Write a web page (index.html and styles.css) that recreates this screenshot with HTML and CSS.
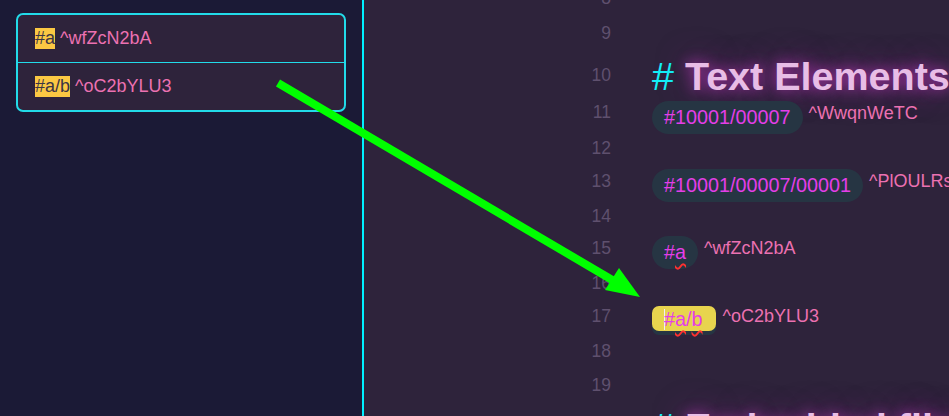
FILE: index.html
```html
<!DOCTYPE html>
<html>
<head>
<meta charset="utf-8">
<link rel="stylesheet" href="styles.css">
</head>
<body>
<div class="app">
  <aside class="sidebar">
    <div class="suggest">
      <div class="item"><span class="hl">#a</span><span class="ref">^wfZcN2bA</span></div>
      <div class="item"><span class="hl">#a/b</span><span class="ref">^oC2bYLU3</span></div>
    </div>
  </aside>
  <main class="editor">
    <div class="lines">
      <div class="line"><span class="ln">8</span><div class="lc"></div></div>
      <div class="line l9"><span class="ln">9</span><div class="lc"></div></div>
      <div class="line l10"><span class="ln">10</span><div class="lc"><h1 class="heading"><span class="hm">#</span> <span class="ht">Text Elements</span></h1></div></div>
      <div class="line l11"><span class="ln">11</span><div class="lc"><span class="tag">#10001/00007</span><span class="ref">^WwqnWeTC</span></div></div>
      <div class="line l12"><span class="ln">12</span><div class="lc"></div></div>
      <div class="line l13"><span class="ln">13</span><div class="lc"><span class="tag">#10001/00007/00001</span><span class="ref">^PlOULRs</span></div></div>
      <div class="line l14"><span class="ln">14</span><div class="lc"></div></div>
      <div class="line l15"><span class="ln">15</span><div class="lc"><span class="tag">#<span class="sq">a</span></span><span class="ref">^wfZcN2bA</span></div></div>
      <div class="line"><span class="ln">16</span><div class="lc"></div></div>
      <div class="line l17"><span class="ln">17</span><div class="lc"><span class="tag sel"><span class="cursor"></span>#<span class="sq">a</span>/<span class="sq">b</span></span><span class="ref">^oC2bYLU3</span></div></div>
      <div class="line"><span class="ln">18</span><div class="lc"></div></div>
      <div class="line"><span class="ln">19</span><div class="lc"></div></div>
      <div class="line l20"><span class="ln">20</span><div class="lc"><h1 class="heading"><span class="hm">#</span> <span class="ht">Embedded files</span></h1></div></div>
    </div>
  </main>
  <svg class="arrow" width="949" height="416" viewBox="0 0 949 416">
    <line x1="278" y1="83" x2="614" y2="281" stroke="#00ff00" stroke-width="8"/>
    <polygon points="640,297 605,290 619,268" fill="#00ff00"/>
  </svg>
</div>
</body>
</html>
```
FILE: styles.css
```css
html, body {
  margin: 0;
  padding: 0;
}
body {
  width: 949px;
  height: 416px;
  overflow: hidden;
  font-family: "Liberation Sans", Arial, sans-serif;
  background: #2e233b;
}
.app {
  position: relative;
  display: flex;
  width: 949px;
  height: 416px;
}
.sidebar {
  flex: none;
  width: 364px;
  box-sizing: border-box;
  background: #1b1a36;
  border-right: 2px solid #00f0ff;
  padding: 13px 0 0 16px;
}
.suggest {
  width: 330px;
  box-sizing: border-box;
  border: 2px solid #22dbe9;
  border-radius: 7px;
  background: #2e233b;
}
.item {
  height: 47px;
  display: flex;
  align-items: center;
  padding-left: 17px;
  font-size: 18px;
  white-space: nowrap;
}
.item + .item {
  border-top: 1px solid #22dbe9;
}
.item .ref {
  margin-left: 5px;
}
.hl {
  background: #fbc843;
  color: #3b3545;
}
.ref {
  color: #ec71b1;
  font-size: 18px;
}
.editor {
  flex: 1;
  overflow: hidden;
  height: 416px;
}
.lines {
  margin-top: -19px;
}
.line {
  display: grid;
  grid-template-columns: 247px 1fr;
  column-gap: 41px;
  height: 34px;
}
.ln {
  text-align: right;
  font-size: 17.5px;
  color: #5f506e;
  padding-top: 7px;
  line-height: 20px;
}
.lc {
  display: flex;
  align-items: flex-start;
  white-space: nowrap;
}
.l9 { height: 39px; }
.l9 .ln { padding-top: 8px; }
.l10 { height: 40px; }
.l10 .ln { padding-top: 11px; }
.l10 .lc { padding-top: 2px; }
.l11 { height: 36px; }
.l11 .ln { padding-top: 8px; }
.l11 .lc { padding-top: 7px; }
.l12 { height: 35px; }
.l12 .ln { padding-top: 8px; }
.l13 .ln { padding-top: 6px; }
.l13 .lc { padding-top: 4px; }
.l14 { height: 33px; }
.l15 .ln { padding-top: 6px; }
.l15 .lc { padding-top: 4px; }
.l17 .ln { padding-top: 6px; }
.l17 .lc { padding-top: 6px; }
.l20 { height: 48px; }
.l20 .ln { padding-top: 14px; }
.l20 .lc { padding-top: 5px; }

.heading {
  margin: 0;
  font-size: 39.5px;
  line-height: 40px;
  font-weight: 700;
  white-space: nowrap;
}
.hm {
  color: #12f0f8;
  font-weight: 400;
}
.ht {
  color: #e8bde6;
  text-shadow: 0 0 14px rgba(190, 60, 190, 0.85), 0 0 32px rgba(150, 40, 150, 0.65);
}
.tag {
  display: inline-block;
  background: #263543;
  color: #e43ee8;
  font-size: 19.8px;
  line-height: 22px;
  padding: 5px 12px 6px 12px;
  border-radius: 17px;
}
.lc .ref {
  margin-left: 6px;
  margin-top: 2px;
  line-height: 20px;
}
.l17 .ref {
  margin-left: 7px;
  margin-top: 0;
}
.tag.sel {
  background: #e8d44e;
  border-radius: 7px;
  padding: 2px 13px 1px 12px;
  box-shadow: 0 4px 0 0 #263543;
}
.cursor {
  display: inline-block;
  width: 1px;
  height: 21px;
  background: #f4ecf4;
  margin-right: -1px;
  vertical-align: -4px;
}
.sq {
  text-decoration: underline wavy #ff3030;
  text-decoration-thickness: 1.5px;
  text-underline-offset: 4px;
}
.arrow {
  position: absolute;
  left: 0;
  top: 0;
  pointer-events: none;
}
```
